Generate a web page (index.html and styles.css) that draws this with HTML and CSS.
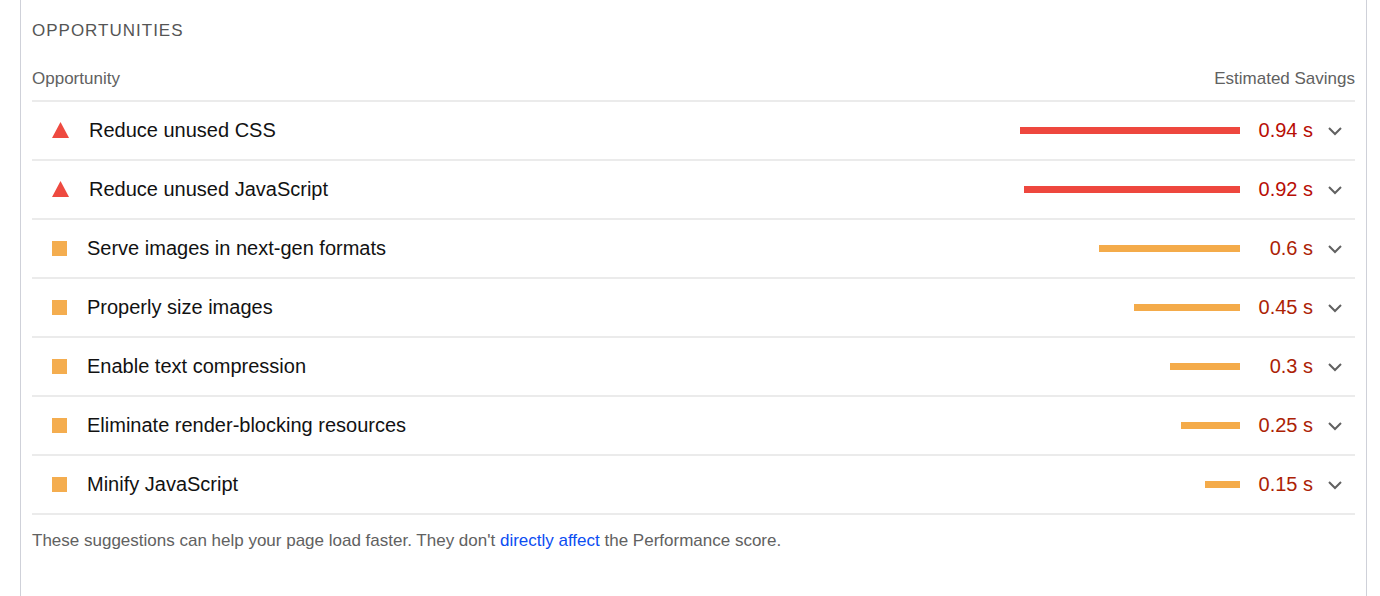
FILE: index.html
```html
<!DOCTYPE html>
<html lang="en">
<head>
  <meta charset="UTF-8" />
  <meta name="viewport" content="width=device-width, initial-scale=1.0"/>
  <title>Opportunities</title>
  <link rel="stylesheet" href="styles.css">
</head>
<body>
  <svg class="symbols" aria-hidden="true">
    <symbol id="chevron" viewBox="0 0 14 12">
      <path d="M1 4l6 6 6-6" fill="none" stroke="currentColor" stroke-width="2"/>
    </symbol>
    <symbol id="triangle" viewBox="0 0 17 17">
      <path d="M8.500 0L17 16H0z" fill="currentColor"/>
    </symbol>
  </svg>

  <main class="panel">
    <h2 class="group-title">Opportunities</h2>
    <div class="list-header">
      <span>Opportunity</span>
      <span>Estimated Savings</span>
    </div>

    <details class="audit fail">
      <summary>
        <svg class="icon triangle"><use href="#triangle"/></svg>
        <span class="audit-title">Reduce unused CSS</span>
        <span class="track"><span class="bar" style="width: 100%"></span></span>
        <span class="savings">0.94 s</span>
        <svg class="chevron"><use href="#chevron"/></svg>
      </summary>
    </details>
    <details class="audit fail">
      <summary>
        <svg class="icon triangle"><use href="#triangle"/></svg>
        <span class="audit-title">Reduce unused JavaScript</span>
        <span class="track"><span class="bar" style="width: 98%"></span></span>
        <span class="savings">0.92 s</span>
        <svg class="chevron"><use href="#chevron"/></svg>
      </summary>
    </details>
    <details class="audit average">
      <summary>
        <span class="icon square"></span>
        <span class="audit-title">Serve images in next-gen formats</span>
        <span class="track"><span class="bar" style="width: 64%"></span></span>
        <span class="savings">0.6 s</span>
        <svg class="chevron"><use href="#chevron"/></svg>
      </summary>
    </details>
    <details class="audit average">
      <summary>
        <span class="icon square"></span>
        <span class="audit-title">Properly size images</span>
        <span class="track"><span class="bar" style="width: 48%"></span></span>
        <span class="savings">0.45 s</span>
        <svg class="chevron"><use href="#chevron"/></svg>
      </summary>
    </details>
    <details class="audit average">
      <summary>
        <span class="icon square"></span>
        <span class="audit-title">Enable text compression</span>
        <span class="track"><span class="bar" style="width: 32%"></span></span>
        <span class="savings">0.3 s</span>
        <svg class="chevron"><use href="#chevron"/></svg>
      </summary>
    </details>
    <details class="audit average">
      <summary>
        <span class="icon square"></span>
        <span class="audit-title">Eliminate render-blocking resources</span>
        <span class="track"><span class="bar" style="width: 27%"></span></span>
        <span class="savings">0.25 s</span>
        <svg class="chevron"><use href="#chevron"/></svg>
      </summary>
    </details>
    <details class="audit average">
      <summary>
        <span class="icon square"></span>
        <span class="audit-title">Minify JavaScript</span>
        <span class="track"><span class="bar" style="width: 16%"></span></span>
        <span class="savings">0.15 s</span>
        <svg class="chevron"><use href="#chevron"/></svg>
      </summary>
    </details>

    <p class="footnote">These suggestions can help your page load faster. They don't <a href="#">directly affect</a> the Performance score.</p>
  </main>
</body>
</html>
```
FILE: styles.css
```css
* {
  box-sizing: border-box;
}
body {
  margin: 0;
  font-family: "Liberation Sans", Arial, sans-serif;
  background-color: #fff;
  color: #616161;
}
.symbols {
  display: none;
}
.panel {
  min-height: 100vh;
  margin: 0 13px 0 20px;
  padding: 21px 11px;
  border: 1px solid #cfd1d9;
  border-width: 0 1px;
}
.group-title {
  margin: 0;
  font-size: 17px;
  font-weight: normal;
  line-height: 20px;
  letter-spacing: 1px;
  text-transform: uppercase;
  color: #555;
}
.list-header {
  display: flex;
  justify-content: space-between;
  padding: 28px 0 11px;
  font-size: 17px;
  line-height: 20px;
  border-bottom: 2px solid #ebebeb;
}
.audit {
  border-bottom: 2px solid #ebebeb;
}
.audit summary {
  display: flex;
  align-items: center;
  padding: 16px 13px 17px 20px;
  font-size: 20px;
  line-height: 24px;
  cursor: pointer;
  list-style: none;
}
.icon {
  flex-shrink: 0;
  margin-right: 20px;
}
.triangle {
  width: 17px;
  height: 17px;
}
.square {
  width: 15px;
  height: 15px;
  background-color: #f4ad4f;
}
.audit-title {
  flex: 1;
  color: #121212;
}
.track {
  display: flex;
  justify-content: flex-end;
  width: 220px;
}
.bar {
  height: 7px;
}
.savings {
  width: 73px;
  text-align: right;
}
.chevron {
  width: 14px;
  height: 12px;
  margin-left: 15px;
}
.audit[open] .chevron {
  transform: rotate(180deg);
}
.fail .icon {
  color: #ee4a40;
}
.fail .bar {
  background-color: #ee473e;
}
.fail .savings {
  color: #b80d05;
}
.average .bar {
  background-color: #f4ab4a;
}
.average .savings {
  color: #ac2205;
}
.footnote {
  margin: 0;
  padding-top: 16px;
  font-size: 17px;
  line-height: 20px;
}
.footnote a {
  color: #0b4df2;
  text-decoration: none;
}
```
